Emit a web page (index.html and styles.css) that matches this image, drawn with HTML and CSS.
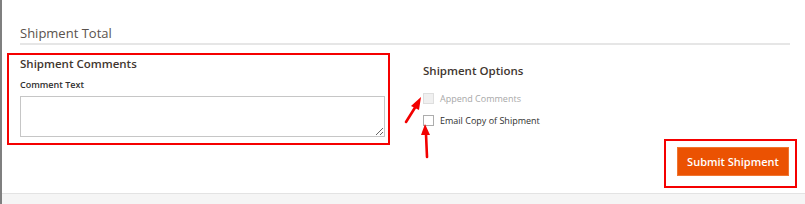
FILE: index.html
```html
<!DOCTYPE html>
<html>
<head>
<meta charset="utf-8">
<link rel="stylesheet" href="styles.css">
</head>
<body>
<div class="page">
  <div class="section-title">Shipment Total</div>
  <div class="row">
    <div class="comments-box">
      <div class="heading">Shipment Comments</div>
      <label class="field-label">Comment Text</label>
      <textarea class="comment-area"></textarea>
    </div>
    <div class="options-col">
      <div class="heading options-heading">Shipment Options</div>
      <div class="option disabled"><span class="check"></span><span class="opt-text">Append Comments</span></div>
      <div class="option"><span class="check"></span><span class="opt-text">Email Copy of Shipment</span></div>
      <div class="submit-box"><button class="submit-btn">Submit Shipment</button></div>
    </div>
  </div>
</div>
<div class="footer"></div>
<svg class="arrows" width="805" height="204" viewBox="0 0 805 204">
  <line x1="406" y1="122" x2="416" y2="106" stroke="#f20000" stroke-width="2.6" stroke-linecap="round"/>
  <polygon points="421,97 411,106 419,110" fill="#f20000"/>
  <line x1="427" y1="157" x2="426" y2="134" stroke="#f20000" stroke-width="2.6" stroke-linecap="round"/>
  <polygon points="425,124 421,135 430,135" fill="#f20000"/>
</svg>
</body>
</html>
```
FILE: styles.css
```css
html, body {
  margin: 0;
  padding: 0;
  background: #ffffff;
}
body {
  position: relative;
  width: 805px;
  height: 204px;
  overflow: hidden;
  border-left: 2px solid #7f7f7f;
  box-sizing: border-box;
  font-family: "Open Sans", "Liberation Sans", sans-serif;
  color: #41362f;
}
.page {
  height: 193px;
  box-sizing: border-box;
  padding-top: 24px;
}
.section-title {
  margin: 0 15px 0 18px;
  font-size: 13px;
  font-weight: 400;
  line-height: 18px;
  padding-bottom: 1px;
  border-bottom: 2px solid #e6e6e6;
  color: #5a524d;
}
.row {
  display: flex;
  margin-top: 8px;
  margin-left: 5px;
}
.comments-box {
  width: 383px;
  height: 92px;
  box-sizing: border-box;
  border: 2px solid #f50000;
  padding: 0 3px 0 11px;
  display: flex;
  flex-direction: column;
}
.heading {
  font-size: 11.5px;
  font-weight: 600;
  line-height: 18px;
  color: #41362f;
}
.field-label {
  margin-top: 5px;
  font-size: 9px;
  font-weight: 600;
  line-height: 14px;
  color: #303030;
}
.comment-area {
  margin-top: 4px;
  width: 365px;
  height: 41px;
  box-sizing: border-box;
  border: 1px solid #c6c6c6;
  padding: 0;
  resize: vertical;
  font-family: inherit;
}
.options-col {
  display: flex;
  flex-direction: column;
  margin-left: 33px;
  width: 374px;
}
.options-heading {
  margin-top: 9px;
  margin-bottom: 12px;
}
.option {
  display: flex;
  align-items: center;
  height: 12px;
  margin-bottom: 10px;
  font-size: 9px;
  color: #303030;
}
.check {
  width: 11px;
  height: 11px;
  box-sizing: border-box;
  border: 1px solid #adadad;
  background: #fff;
  margin-right: 6px;
}
.option.disabled .check {
  border-color: #dedede;
  background: #f0f0f0;
}
.option.disabled .opt-text {
  color: #a8a8a8;
}
.submit-box {
  align-self: flex-end;
  margin-top: 3px;
  width: 133px;
  height: 49px;
  box-sizing: border-box;
  border: 2px solid #f50000;
  padding: 6px 6px 0 11px;
}
.submit-btn {
  display: block;
  width: 112px;
  height: 29px;
  box-sizing: border-box;
  background: #eb5202;
  border: 1px solid #f07530;
  color: #ffffff;
  font-family: "Open Sans", "Liberation Sans", sans-serif;
  font-size: 11px;
  font-weight: 600;
  padding: 0;
}
.footer {
  height: 11px;
  background: #f5f5f5;
  border-top: 1px solid #e3e3e3;
  box-sizing: border-box;
}
.arrows {
  position: absolute;
  left: -2px;
  top: 0;
  pointer-events: none;
}
```
